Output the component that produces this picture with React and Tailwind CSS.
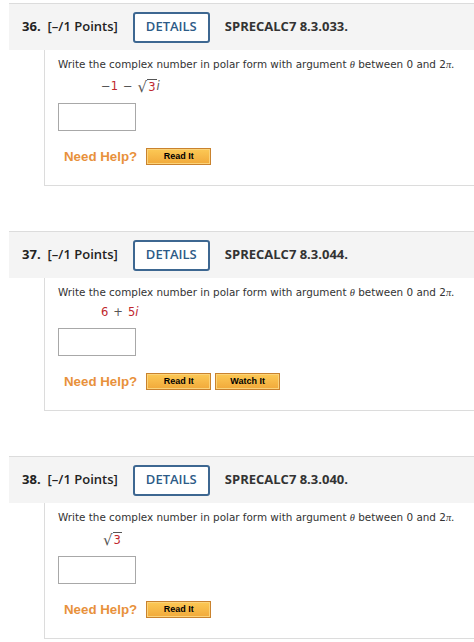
import React from 'react';

const verdana = { fontFamily: '"DejaVu Sans", Verdana, sans-serif' };
const arial = { fontFamily: '"Liberation Sans", Arial, sans-serif' };

const HelpButton = ({ label }) => (
    <span
        className="flex h-[17px] w-[65px] items-center justify-center border border-[#c9822e] bg-gradient-to-b from-[#fcc955] to-[#f1a93a] text-[9px] font-bold text-black shadow-[inset_0_0_0_1px_#fbd37a]"
        style={arial}
    >
        {label}
    </span>
);

const Red = ({ children }) => <span className="text-[#c0272d]">{children}</span>;

const Sqrt = ({ children }) => (
    <span className="inline-flex items-end">
        <span className="text-[15px] leading-none">√</span>
        <span className="border-t border-[#555] leading-[15px] px-[1px]">{children}</span>
    </span>
);

const Question = ({ num, code, math, watch, gapTop, mathHeight = 'h-[18px]' }) => (
    <div className={gapTop}>
        <div className="ml-[9px] flex h-[47px] items-center border-t border-[#dcdcdc] bg-[#f4f4f4] pl-[13px] text-[13px] text-[#222]" style={{ fontFamily: '"Open Sans", sans-serif' }}>
            <span className="font-bold">{num}.</span>
            <span className="ml-[7px] font-semibold">[–/1 Points]</span>
            <span className="ml-[15px] flex h-[31px] w-[77px] items-center justify-center rounded-[3px] border-2 border-[#3d6791] bg-white font-semibold text-[#2d5b87]">
                DETAILS
            </span>
            <span className="ml-[15px] font-bold text-[#333]">{code}</span>
        </div>
        <div className="ml-[44px] border-b border-l border-[#dcdcdc] pb-[20px] pl-[13px] pt-[6px]">
            <p className="whitespace-nowrap text-[10.4px] leading-[16px] text-[#333]" style={verdana}>
                Write the complex number in polar form with argument <i className="font-serif">θ</i> between 0 and 2<i className="font-serif">π</i>.
            </p>
            <div className={`ml-[43px] mt-[4px] flex items-end text-[11.5px] text-[#555] ${mathHeight}`} style={verdana}>
                {math}
            </div>
            <div className="mt-[8px] h-[28px] w-[78px] border border-[#a8a8a8] bg-white" />
            <div className="ml-[6px] mt-[17px] flex h-[17px] items-center">
                <span className="mr-[9px] text-[13.3px] font-bold leading-none text-[#e8913b]" style={arial}>
                    Need Help?
                </span>
                <HelpButton label="Read It" />
                {watch && <span className="ml-[4px]"><HelpButton label="Watch It" /></span>}
            </div>
        </div>
    </div>
);

export default function App() {
    return (
        <div className="h-[642px] w-[474px] overflow-hidden bg-white pt-[3px]">
            <Question
                num="36"
                code="SPRECALC7 8.3.033."
                math={
                    <span className="flex items-end gap-[5px]">
                        <span>−<Red>1</Red></span>
                        <span>−</span>
                        <span className="flex items-end"><Sqrt><Red>3</Red></Sqrt><i>i</i></span>
                    </span>
                }
            />
            <Question
                num="37"
                gapTop="mt-[45px]"
                code="SPRECALC7 8.3.044."
                watch
                mathHeight="h-[15px]"
                math={
                    <span className="flex items-end gap-[5px] leading-[15px]">
                        <Red>6</Red>
                        <span>+</span>
                        <Red>5<i>i</i></Red>
                    </span>
                }
            />
            <Question
                num="38"
                gapTop="mt-[45px]"
                code="SPRECALC7 8.3.040."
                math={
                    <span className="ml-[2px] flex items-end">
                        <Sqrt><Red>3</Red></Sqrt>
                    </span>
                }
            />
        </div>
    );
}
